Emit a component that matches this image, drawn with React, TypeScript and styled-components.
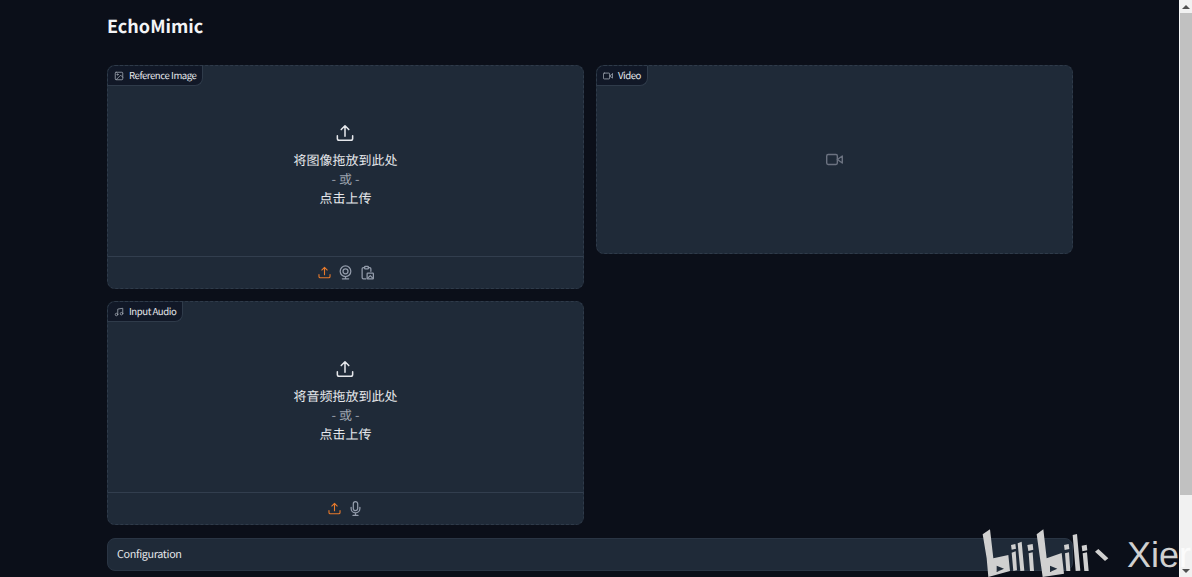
import React from "react";
import styled, { createGlobalStyle } from "styled-components";

const GlobalStyle = createGlobalStyle`
  html, body { margin: 0; padding: 0; height: 100%; overflow: hidden; background: #0b0f19; }
  body {
    font-family: "Noto Sans CJK SC", "Noto Sans", sans-serif;
    color: #f3f4f6;
    text-rendering: geometricPrecision;
  }
`;

const Page = styled.div`
  display: flex;
  width: 1192px;
  height: 577px;
  overflow: hidden;
  position: relative;
`;

const Main = styled.main`
  width: 966px;
  margin-left: 107px;
  flex: none;
`;

const Title = styled.h1`
  margin: 0;
  padding-top: 11px;
  height: 65px;
  box-sizing: border-box;
  font-size: 18px;
  line-height: 30px;
  font-weight: 600;
  color: #f3f4f6;
`;

const Columns = styled.div`
  display: grid;
  grid-template-columns: 477px 477px;
  column-gap: 12px;
  align-items: start;
`;

const Stack = styled.div`
  display: flex;
  flex-direction: column;
  gap: 12px;
`;

const Panel = styled.section<{ $height: number }>`
  position: relative;
  display: flex;
  flex-direction: column;
  height: ${({ $height }) => $height}px;
  box-sizing: border-box;
  background: #1f2a38;
  border: 1px dashed #2f3b4a;
  border-radius: 8px;
  overflow: hidden;
`;

const BlockLabel = styled.div`
  position: absolute;
  top: 0;
  left: 0;
  display: flex;
  align-items: center;
  gap: 5px;
  height: 20px;
  padding: 0 6px 2px;
  box-sizing: border-box;
  background: #111827;
  border-right: 1px solid #2f3b4a;
  border-bottom: 1px solid #2f3b4a;
  border-radius: 0 0 8px 0;
  font-size: 9.6px;
  letter-spacing: -0.45px;
  color: #e5e7eb;

  svg {
    width: 10px;
    height: 10px;
    margin-top: 2px;
    color: #9ca3af;
  }
`;

const DropZone = styled.div`
  flex: 1;
  display: flex;
  flex-direction: column;
  align-items: center;
  justify-content: center;
  font-size: 13px;
  line-height: 19px;
  color: #e5e7eb;
  padding-top: 9px;
`;

const UploadMark = styled.div`
  width: 18px;
  height: 18px;
  margin: 0 2px 8px 0;
  color: #e5e7eb;
`;

const OrText = styled.div`
  color: #9ca3af;
`;

const Toolbar = styled.div`
  display: flex;
  align-items: center;
  justify-content: center;
  gap: 9px;
  height: 31px;
  flex: none;
  padding-right: 1px;
  border-top: 1px solid #323e4e;
`;

const ToolIcon = styled.span<{ $active?: boolean }>`
  display: flex;
  width: 12px;
  height: 15px;
  align-items: center;
  justify-content: center;
  color: ${({ $active }) => ($active ? "#e87a2b" : "#939cab")};

  svg {
    width: ${({ $active }) => ($active ? 13 : 15)}px;
    height: ${({ $active }) => ($active ? 13 : 15)}px;
    flex: none;
  }
`;

const EmptyVideo = styled.div`
  flex: 1;
  display: flex;
  align-items: center;
  justify-content: center;
  color: #6b7280;

  svg {
    width: 17px;
    height: 17px;
  }
`;

const Accordion = styled.div`
  display: flex;
  align-items: center;
  height: 33px;
  margin-top: 13px;
  padding: 0 9px 2px;
  box-sizing: border-box;
  background: #1f2a38;
  border: 1px solid #2a3544;
  border-radius: 8px;
  font-size: 10.8px;
  letter-spacing: -0.35px;
  color: #e5e7eb;
`;

const Scrollbar = styled.div`
  position: absolute;
  top: 0;
  right: 0;
  bottom: 0;
  width: 12px;
  display: flex;
  flex-direction: column;
  align-items: center;
  background: #f1f1f1;
  border-left: 1px solid #fafafa;
`;

const ScrollArrow = styled.div<{ $down?: boolean }>`
  flex: none;
  height: 13px;
  width: 100%;
  display: flex;
  align-items: center;
  justify-content: center;

  &::before {
    content: "";
    border-left: 4px solid transparent;
    border-right: 4px solid transparent;
    ${({ $down }) => ($down ? "border-top: 4px solid #505050;" : "border-bottom: 4px solid #505050;")}
  }
`;

const ScrollThumb = styled.div`
  flex: none;
  height: 482px;
  width: 100%;
  background: #c1c1c1;
`;

const ScrollTrack = styled.div`
  flex: 1;
`;

const Watermark = styled.div`
  position: absolute;
  left: 980px;
  bottom: 0;
  display: flex;
  align-items: flex-end;
  height: 52px;
  pointer-events: none;
  color: #d0d0d0;

  svg {
    width: 135px;
    height: 52px;
    flex: none;
  }
`;

const WatermarkName = styled.span`
  margin: 0 0 1px 12px;
  font-family: "Liberation Sans", sans-serif;
  font-size: 36px;
  line-height: 42px;
  white-space: nowrap;
`;

const WatermarkFade = styled.span`
  color: #fbfbfb;
`;

const UploadIcon = () => (
  <svg viewBox="0 0 20 20" fill="none" stroke="currentColor" strokeWidth="1.7" strokeLinecap="round" strokeLinejoin="round">
    <path d="M1.5 13v3a2 2 0 0 0 2 2h13a2 2 0 0 0 2-2v-3" />
    <path d="M10 13.5V2M5.8 6.2 10 2l4.2 4.2" />
  </svg>
);

const ImageIcon = () => (
  <svg viewBox="0 0 24 24" fill="none" stroke="currentColor" strokeWidth="2" strokeLinecap="round" strokeLinejoin="round">
    <rect x="3" y="3" width="18" height="18" rx="2" />
    <circle cx="8.5" cy="8.5" r="1.5" />
    <path d="m21 15-5-5L5 21" />
  </svg>
);

const MusicIcon = () => (
  <svg viewBox="0 0 24 24" fill="none" stroke="currentColor" strokeWidth="2" strokeLinecap="round" strokeLinejoin="round">
    <path d="M9 18V5l12-2v13" />
    <circle cx="6" cy="18" r="3" />
    <circle cx="18" cy="16" r="3" />
  </svg>
);

const VideoIcon = () => (
  <svg viewBox="0 0 24 24" fill="none" stroke="currentColor" strokeWidth="2" strokeLinecap="round" strokeLinejoin="round">
    <path d="m23 7-7 5 7 5V7z" />
    <rect x="1" y="5" width="15" height="14" rx="2" />
  </svg>
);

const WebcamIcon = () => (
  <svg viewBox="0 0 24 24" fill="none" stroke="currentColor" strokeWidth="2" strokeLinecap="round" strokeLinejoin="round">
    <circle cx="12" cy="10" r="8.5" />
    <circle cx="12" cy="10" r="4" />
    <path d="M7 22h10M12 18.5V22" />
  </svg>
);

const ClipboardIcon = () => (
  <svg viewBox="0 0 24 24" fill="none" stroke="currentColor" strokeWidth="2" strokeLinecap="round" strokeLinejoin="round">
    <path d="M15 4h2a2 2 0 0 1 2 2v4M9 4H7a2 2 0 0 0-2 2v14a2 2 0 0 0 2 2h4" />
    <rect x="9" y="2" width="6" height="4" rx="1" />
    <rect x="13" y="13" width="10" height="9" rx="1" />
    <path d="m14 21 4-4 4 4" />
  </svg>
);

const MicIcon = () => (
  <svg viewBox="0 0 24 24" fill="none" stroke="currentColor" strokeWidth="2" strokeLinecap="round" strokeLinejoin="round">
    <path d="M12 1a3.5 3.5 0 0 0-3.5 3.5V12a3.5 3.5 0 0 0 7 0V4.5A3.5 3.5 0 0 0 12 1z" />
    <path d="M19 10v2a7 7 0 0 1-14 0v-2M12 19v4M8 23h8" />
  </svg>
);

// the bilibili mark, traced as a logo; viewBox is 3x its screen size
const BiliMark = () => (
  <svg viewBox="0 0 405 156" fill="currentColor">
    <path fillRule="evenodd" d="M8 28 30 13 40 100 85 90 90 138 25 156 20 100ZM50 122 50 141 72 131Z" />
    <path d="M93 60 106 57 108 71 95 74ZM95 83 107 79 111 136 100 138ZM113 55 125 50 133 137 121 138ZM142 60 158 57 160 74 145 78ZM146 85 158 82 162 138 150 138Z" />
    <path fillRule="evenodd" d="M170 28 190 13 200 100 245 84 252 146 188 156 180 100ZM210 122 210 141 232 131Z" />
    <path d="M252 60 266 57 268 72 254 75ZM255 85 267 82 271 138 259 138ZM278 30 291 27 301 137 287 138ZM305 62 320 59 322 76 307 79ZM308 85 321 82 326 138 313 138ZM345 80 355 72 385 100 375 108Z" />
  </svg>
);

const App: React.FC = () => (
  <Page>
    <GlobalStyle />
    <Main>
      <Title>EchoMimic</Title>
      <Columns>
        <Stack>
          <Panel $height={224}>
            <BlockLabel><ImageIcon />Reference Image</BlockLabel>
            <DropZone>
              <UploadMark><UploadIcon /></UploadMark>
              <div>将图像拖放到此处</div>
              <OrText>- 或 -</OrText>
              <div>点击上传</div>
            </DropZone>
            <Toolbar>
              <ToolIcon $active><UploadIcon /></ToolIcon>
              <ToolIcon><WebcamIcon /></ToolIcon>
              <ToolIcon><ClipboardIcon /></ToolIcon>
            </Toolbar>
          </Panel>
          <Panel $height={224}>
            <BlockLabel><MusicIcon />Input Audio</BlockLabel>
            <DropZone>
              <UploadMark><UploadIcon /></UploadMark>
              <div>将音频拖放到此处</div>
              <OrText>- 或 -</OrText>
              <div>点击上传</div>
            </DropZone>
            <Toolbar>
              <ToolIcon $active><UploadIcon /></ToolIcon>
              <ToolIcon><MicIcon /></ToolIcon>
            </Toolbar>
          </Panel>
        </Stack>
        <Panel $height={189}>
          <BlockLabel><VideoIcon />Video</BlockLabel>
          <EmptyVideo><VideoIcon /></EmptyVideo>
        </Panel>
      </Columns>
      <Accordion>Configuration</Accordion>
    </Main>
    <Scrollbar>
      <ScrollArrow />
      <ScrollThumb />
      <ScrollTrack />
      <ScrollArrow $down />
    </Scrollbar>
    <Watermark>
      <BiliMark />
      <WatermarkName>Xie<WatermarkFade>r</WatermarkFade></WatermarkName>
    </Watermark>
  </Page>
);

export default App;
